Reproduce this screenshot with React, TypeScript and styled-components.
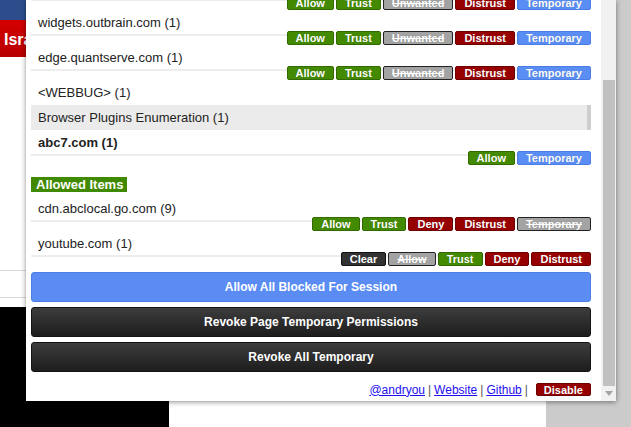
import React, { useLayoutEffect, useRef } from "react";
import styled, { createGlobalStyle, css } from "styled-components";

type Kind = "allow" | "trust" | "unwanted" | "distrust" | "deny" | "temp" | "clear";

type Host = {
  name: string;
  count: number;
  actions: { label: string; kind: Kind; off?: boolean }[];
  current?: boolean;
};

const GlobalStyle = createGlobalStyle`
  html, body {
    margin: 0;
    padding: 0;
    background: #fff;
    font-family: "Liberation Sans", Arial, sans-serif;
  }
`;

const Page = styled.div`
  position: relative;
  width: 631px;
  height: 427px;
  overflow: hidden;
  display: grid;
  grid-template-columns: 546px 1fr;
`;

const Site = styled.div`
  display: flex;
  flex-direction: column;
  background: #fff;
`;

const SiteTop = styled.div`
  height: 20px;
  background: #2c4c8c;
`;

const SiteNav = styled.div`
  height: 37px;
  background: linear-gradient(#d40000, #b80000);
  color: #fff;
  font: bold 16px "Liberation Sans", Arial, sans-serif;
  line-height: 40px;
  padding-left: 4px;
`;

const SiteMain = styled.div`
  flex: 1;
  padding-top: 213px;
`;

const SiteTabs = styled.div`
  height: 26px;
  border-top: 1px solid #d8d8d8;
  border-bottom: 1px solid #d8d8d8;
`;

const SiteVideo = styled.div`
  width: 169px;
  height: 120px;
  background: #000;
`;

const SideGutter = styled.div`
  background: #cbcbcb;
`;

const Popup = styled.div`
  position: absolute;
  left: 26px;
  top: 0;
  width: 590px;
  height: 401px;
  display: flex;
  background: #fff;
  box-shadow: 0 1px 5px rgba(0, 0, 0, 0.45);
`;

const ScrollArea = styled.div`
  position: relative;
  flex: 1;
  overflow: hidden;
  padding: 0 10px 0 5px;
`;

const Scrollbar = styled.div`
  width: 15px;
  display: flex;
  flex-direction: column;
  background: #f1f1f1;
`;

const Thumb = styled.div`
  margin: 80px 1px 0 2px;
  height: 306px;
  background: #c1c1c1;
`;

const ArrowButton = styled.div`
  flex: 1;
  display: flex;
  align-items: center;
  justify-content: center;
`;

const Content = styled.div`
  padding-bottom: 6px;
`;

const SectionLabel = styled.div<{ $tone: "blocked" | "allowed" }>`
  display: inline-block;
  margin: 12px 0 4px;
  padding: 0 4px 0 5px;
  height: 15px;
  font: bold 13px/15px "Liberation Sans", Arial, sans-serif;
  color: #fff;
  background: ${(p) => (p.$tone === "allowed" ? "#3f8a00" : "#990000")};
`;

const HostRow = styled.div<{ $current?: boolean; $plain?: boolean }>`
  padding: 5px 0 4px 7px;
  font-size: 13px;
  line-height: 15px;
  color: #222;
  font-weight: ${(p) => (p.$current ? "bold" : "normal")};
  border-bottom: 2px solid #ededed;
  ${(p) =>
    p.$plain &&
    css`
      border-bottom: none;
      padding-bottom: 5px;
    `}
`;

const SubRow = styled.div`
  padding: 5px 0 5px 7px;
  font-size: 13px;
  line-height: 15px;
  color: #222;
  background: #ebebeb;
  border-right: 4px solid #cecece;
`;

const Actions = styled.div`
  display: flex;
  justify-content: flex-end;
  gap: 2px;
  margin-top: -5px;
  height: 14px;
`;

const kindColors: Record<Kind, [string, string]> = {
  allow: ["#448a00", "#336a00"],
  trust: ["#448a00", "#336a00"],
  unwanted: ["#a3a3a3", "#222"],
  distrust: ["#970000", "#6a0000"],
  deny: ["#970000", "#6a0000"],
  temp: ["#5b8ef5", "#4a7ee6"],
  clear: ["#333", "#111"],
};

const ActionButton = styled.button<{ $kind: Kind; $off?: boolean }>`
  height: 14px;
  margin: 0;
  padding: 0 8px;
  border-radius: 2px;
  font: bold 11px/12px "Liberation Sans", Arial, sans-serif;
  color: #fff;
  text-shadow: 0 0 1px rgba(0, 0, 0, 0.25);
  background: ${(p) => kindColors[p.$kind][0]};
  border: 1px solid ${(p) => kindColors[p.$kind][1]};
  ${(p) =>
    p.$off &&
    css`
      background: #a3a3a3;
      border-color: #222;
      text-decoration: line-through;
    `}
`;

const BigButton = styled.button<{ $variant: "blue" | "dark" }>`
  display: block;
  width: 100%;
  height: 30px;
  margin: 5px 0 0;
  border-radius: 3px;
  font: bold 12px "Liberation Sans", Arial, sans-serif;
  color: #fff;
  ${(p) =>
    p.$variant === "blue"
      ? css`
          margin-top: 6px;
          background: #5a8cf4;
          border: 1px solid #4b7fe6;
        `
      : css`
          background: linear-gradient(#3d3d3d, #1d1d1d);
          border: 1px solid #141414;
        `}
`;

const Footer = styled.div`
  display: flex;
  justify-content: flex-end;
  align-items: center;
  gap: 3px;
  margin-top: 11px;
  height: 13px;
  font-size: 12px;
  color: #555;
`;

const FooterLink = styled.a`
  color: #1d0ef0;
  text-decoration: underline;
`;

const DisableButton = styled(ActionButton)`
  height: 13px;
  margin-left: 5px;
  padding: 0 7px;
`;

const fullSet = (): Host["actions"] => [
  { label: "Allow", kind: "allow" },
  { label: "Trust", kind: "trust" },
  { label: "Unwanted", kind: "unwanted", off: true },
  { label: "Distrust", kind: "distrust" },
  { label: "Temporary", kind: "temp" },
];

const hiddenHosts: Host[] = [
  { name: "b.scorecardresearch.com", count: 2, actions: fullSet() },
];

const blockedHosts: Host[] = [
  { name: "widgets.outbrain.com", count: 1, actions: fullSet() },
  { name: "edge.quantserve.com", count: 1, actions: fullSet() },
];

const allowedHosts: Host[] = [
  {
    name: "cdn.abclocal.go.com",
    count: 9,
    actions: [
      { label: "Allow", kind: "allow" },
      { label: "Trust", kind: "trust" },
      { label: "Deny", kind: "deny" },
      { label: "Distrust", kind: "distrust" },
      { label: "Temporary", kind: "temp", off: true },
    ],
  },
  {
    name: "youtube.com",
    count: 1,
    actions: [
      { label: "Clear", kind: "clear" },
      { label: "Allow", kind: "allow", off: true },
      { label: "Trust", kind: "trust" },
      { label: "Deny", kind: "deny" },
      { label: "Distrust", kind: "distrust" },
    ],
  },
];

function HostItem({ host }: { host: Host }) {
  return (
    <>
      <HostRow $current={host.current}>
        {host.name} ({host.count})
      </HostRow>
      <Actions>
        {host.actions.map((a) => (
          <ActionButton key={a.label} $kind={a.kind} $off={a.off}>
            {a.label}
          </ActionButton>
        ))}
      </Actions>
    </>
  );
}

export default function App() {
  const areaRef = useRef<HTMLDivElement>(null);
  const anchorRef = useRef<HTMLDivElement>(null);

  // the popup is scrolled so the outbrain row sits near the top
  useLayoutEffect(() => {
    if (areaRef.current && anchorRef.current) {
      areaRef.current.scrollTop = anchorRef.current.offsetTop - 10;
    }
  }, []);

  return (
    <>
      <GlobalStyle />
      <Page>
        <Site>
          <SiteTop />
          <SiteNav>Isra</SiteNav>
          <SiteMain>
            <SiteTabs />
          </SiteMain>
          <SiteVideo />
        </Site>
        <SideGutter />

        <Popup>
          <ScrollArea ref={areaRef}>
            <Content>
              <SectionLabel $tone="blocked">Blocked Items</SectionLabel>
              {hiddenHosts.map((h) => (
                <HostItem key={h.name} host={h} />
              ))}
              <div ref={anchorRef} />
              {blockedHosts.map((h) => (
                <HostItem key={h.name} host={h} />
              ))}
              <HostRow $plain>&lt;WEBBUG&gt; (1)</HostRow>
              <SubRow>Browser Plugins Enumeration (1)</SubRow>
              <HostItem
                host={{
                  name: "abc7.com",
                  count: 1,
                  current: true,
                  actions: [
                    { label: "Allow", kind: "allow" },
                    { label: "Temporary", kind: "temp" },
                  ],
                }}
              />

              <SectionLabel $tone="allowed">Allowed Items</SectionLabel>
              {allowedHosts.map((h) => (
                <HostItem key={h.name} host={h} />
              ))}

              <BigButton $variant="blue">Allow All Blocked For Session</BigButton>
              <BigButton $variant="dark">Revoke Page Temporary Permissions</BigButton>
              <BigButton $variant="dark">Revoke All Temporary</BigButton>

              <Footer>
                <FooterLink href="#">@andryou</FooterLink>|
                <FooterLink href="#">Website</FooterLink>|
                <FooterLink href="#">Github</FooterLink>|
                <DisableButton $kind="distrust">Disable</DisableButton>
              </Footer>
            </Content>
          </ScrollArea>
          <Scrollbar>
            <Thumb />
            <ArrowButton>
              <svg width="8" height="5" viewBox="0 0 8 5">
                <path d="M0 0h8L4 5z" fill="#a3a3a3" />
              </svg>
            </ArrowButton>
          </Scrollbar>
        </Popup>
      </Page>
    </>
  );
}
